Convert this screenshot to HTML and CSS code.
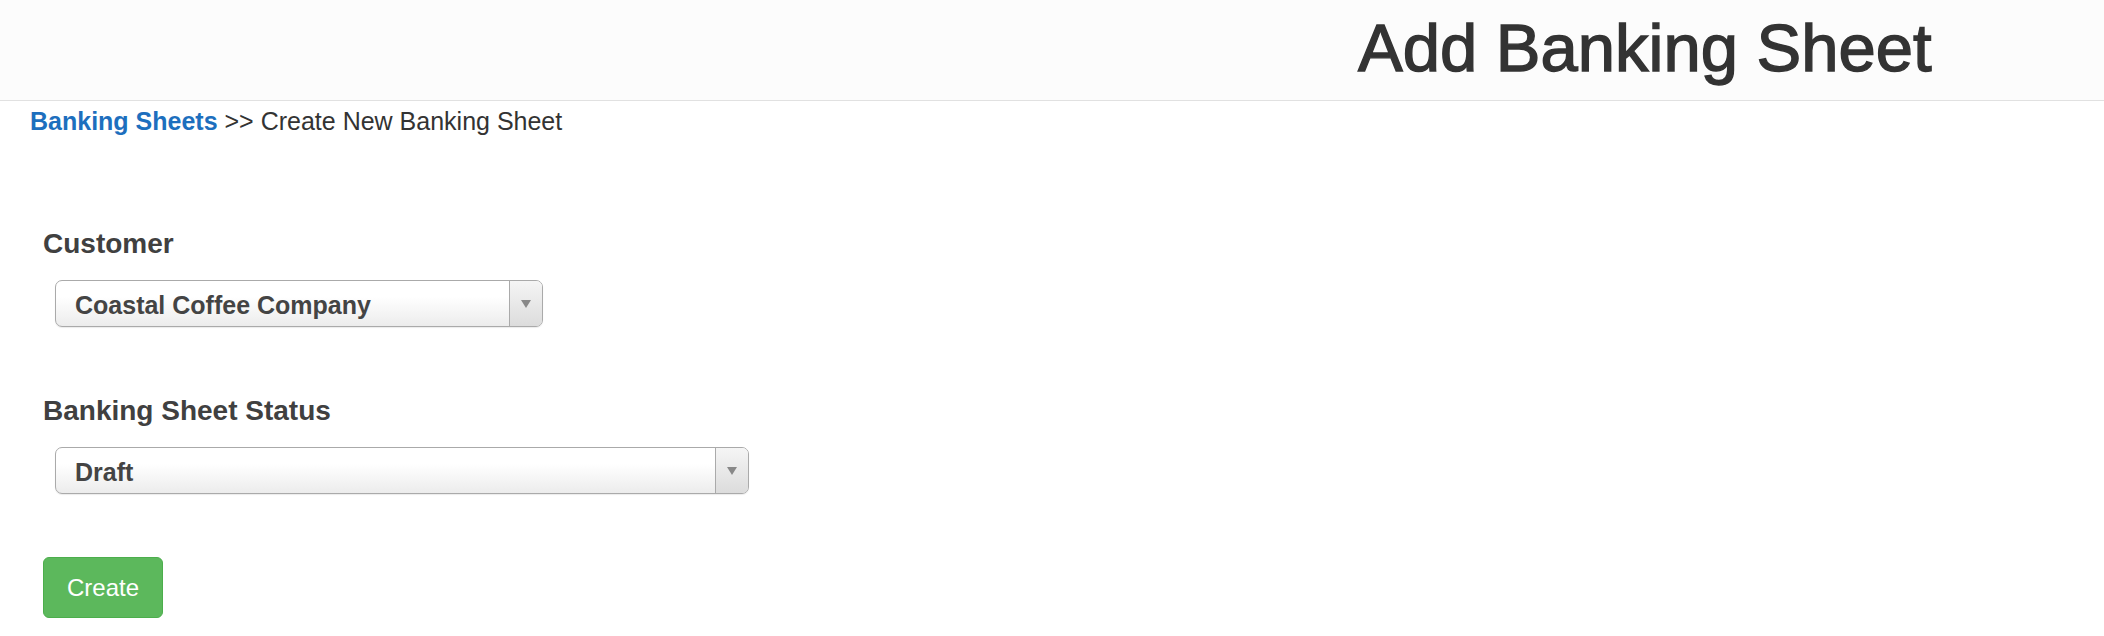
FILE: index.html
```html
<!DOCTYPE html>
<html lang="en">
<head>
    <meta charset="UTF-8">
    <meta name="viewport" content="width=device-width, initial-scale=1.0">
    <title>Add Banking Sheet</title>
    <link rel="stylesheet" href="styles.css">
</head>
<body>
    <header class="page-header">
        <h1>Add Banking Sheet</h1>
    </header>

    <div class="breadcrumb">
        <a href="#">Banking Sheets</a> &gt;&gt; Create New Banking Sheet
    </div>

    <form class="sheet-form" onsubmit="return false;">
        <div class="form-group">
            <label>Customer</label>
            <div class="chosen-single customer-select">
                <span>Coastal Coffee Company</span>
                <div class="chosen-arrow"><b></b></div>
            </div>
        </div>

        <div class="form-group">
            <label>Banking Sheet Status</label>
            <div class="chosen-single status-select">
                <span>Draft</span>
                <div class="chosen-arrow"><b></b></div>
            </div>
        </div>

        <button class="btn-create" type="submit">Create</button>
    </form>
</body>
</html>
```

FILE: styles.css
```css
body {
    margin: 0;
    font-family: "Liberation Sans", Arial, sans-serif;
    color: #333;
    background: #fff;
}
.page-header {
    height: 100px;
    background: #fcfcfc;
    border-bottom: 1px solid #e1e1e1;
}
.page-header h1 {
    margin: 0;
    padding: 12px 0 0 1358px;
    font-size: 67px;
    font-weight: normal;
    line-height: 72px;
    color: #333;
    -webkit-text-stroke: 1.4px #333;
}
.breadcrumb {
    margin-top: 2px;
    padding-left: 30px;
    font-size: 25px;
    line-height: 36px;
    color: #333;
}
.breadcrumb a {
    color: #1d6fbe;
    font-weight: bold;
    text-decoration: none;
}
.sheet-form {
    margin-top: 85px;
    padding-left: 43px;
}
.form-group {
    margin-bottom: 64px;
}
.form-group label {
    display: block;
    font-size: 28px;
    font-weight: bold;
    line-height: 40px;
    color: #404040;
    margin-bottom: 16px;
}
.chosen-single {
    display: flex;
    margin-left: 12px;
    height: 47px;
    box-sizing: border-box;
    border: 1px solid #aaa;
    border-radius: 7px;
    background: linear-gradient(#fff 0%, #fff 35%, #ececec 100%);
    box-shadow: 0 1px 1px rgba(0, 0, 0, 0.08);
    overflow: hidden;
}
.chosen-single span {
    flex: 1;
    padding: 4px 0 0 19px;
    font-size: 25px;
    font-weight: bold;
    line-height: 41px;
    color: #444;
}
.chosen-arrow {
    width: 32px;
    display: flex;
    align-items: center;
    justify-content: center;
    border-left: 1px solid #aaa;
    background: linear-gradient(#f5f5f5, #dcdcdc);
}
.chosen-arrow b {
    width: 0;
    height: 0;
    margin-top: 1px;
    border-left: 5.5px solid transparent;
    border-right: 5.5px solid transparent;
    border-top: 8px solid #888;
}
.customer-select {
    width: 488px;
}
.status-select {
    width: 694px;
}
.btn-create {
    display: block;
    margin-top: -1px;
    padding: 0 23px;
    height: 61px;
    font-family: "Liberation Sans", Arial, sans-serif;
    font-size: 24px;
    color: #fff;
    background: #5cb85c;
    border: 1px solid #4cae4c;
    border-radius: 6px;
    cursor: pointer;
}
```
